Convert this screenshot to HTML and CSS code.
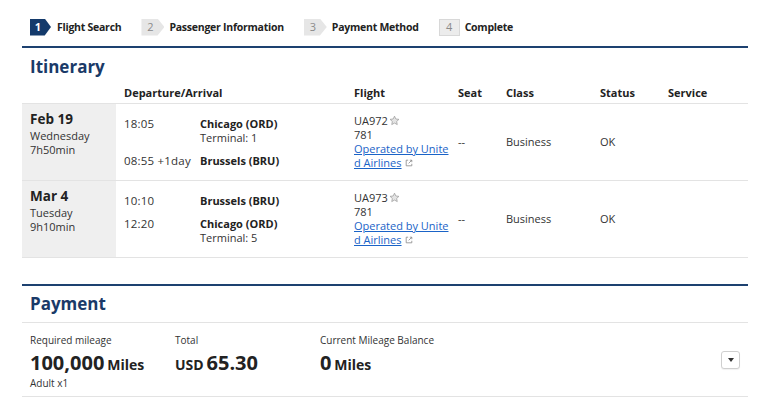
FILE: index.html
```html
<!DOCTYPE html>
<html lang="en">
<head>
<meta charset="utf-8">
<title>Itinerary</title>
<link rel="stylesheet" href="styles.css">
</head>
<body>
<div class="page">
  <nav class="steps">
    <div class="step active"><span class="badge">1</span><span class="label">Flight Search</span></div>
    <div class="step"><span class="badge">2</span><span class="label">Passenger Information</span></div>
    <div class="step"><span class="badge">3</span><span class="label">Payment Method</span></div>
    <div class="step"><span class="badge last">4</span><span class="label">Complete</span></div>
  </nav>

  <section class="section">
    <h2 class="title">Itinerary</h2>
    <div class="row head">
      <div class="c-date"></div>
      <div class="c-route">Departure/Arrival</div>
      <div class="c-flight">Flight</div>
      <div class="c-seat">Seat</div>
      <div class="c-class">Class</div>
      <div class="c-status">Status</div>
      <div class="c-service">Service</div>
    </div>

    <div class="row body">
      <div class="c-date">
        <div class="date">Feb 19</div>
        <div>Wednesday</div>
        <div>7h50min</div>
      </div>
      <div class="c-route route">
        <div class="leg">
          <div class="time">18:05</div>
          <div class="place"><strong>Chicago (ORD)</strong><span>Terminal: 1</span></div>
        </div>
        <div class="leg">
          <div class="time">08:55 +1day</div>
          <div class="place"><strong>Brussels (BRU)</strong></div>
        </div>
      </div>
      <div class="c-flight flight">
        <div>UA972<svg class="star" viewBox="0 0 24 24"><path d="M12 2.5l2.9 6.2 6.8.8-5 4.7 1.3 6.7L12 17.6l-6 3.3 1.3-6.7-5-4.7 6.8-.8z"/></svg></div>
        <div>781</div>
        <div><a href="#">Operated by United Airlines</a><svg class="ext" viewBox="0 0 10 10"><path d="M4 1.5H1.5v7h7V6M6 1.5h2.5V4M8.5 1.5L4.5 5.5"/></svg></div>
      </div>
      <div class="c-seat mid">--</div>
      <div class="c-class mid">Business</div>
      <div class="c-status mid">OK</div>
      <div class="c-service mid"></div>
    </div>

    <div class="row body">
      <div class="c-date">
        <div class="date">Mar 4</div>
        <div>Tuesday</div>
        <div>9h10min</div>
      </div>
      <div class="c-route route">
        <div class="leg">
          <div class="time">10:10</div>
          <div class="place"><strong>Brussels (BRU)</strong></div>
        </div>
        <div class="leg">
          <div class="time">12:20</div>
          <div class="place"><strong>Chicago (ORD)</strong><span>Terminal: 5</span></div>
        </div>
      </div>
      <div class="c-flight flight">
        <div>UA973<svg class="star" viewBox="0 0 24 24"><path d="M12 2.5l2.9 6.2 6.8.8-5 4.7 1.3 6.7L12 17.6l-6 3.3 1.3-6.7-5-4.7 6.8-.8z"/></svg></div>
        <div>781</div>
        <div><a href="#">Operated by United Airlines</a><svg class="ext" viewBox="0 0 10 10"><path d="M4 1.5H1.5v7h7V6M6 1.5h2.5V4M8.5 1.5L4.5 5.5"/></svg></div>
      </div>
      <div class="c-seat mid">--</div>
      <div class="c-class mid">Business</div>
      <div class="c-status mid">OK</div>
      <div class="c-service mid"></div>
    </div>
  </section>

  <section class="section payment">
    <h2 class="title">Payment</h2>
    <div class="pay-row">
      <div class="pay-col">
        <div class="pay-label">Required mileage</div>
        <div class="pay-value"><span class="big">100,000</span> <span class="unit">Miles</span></div>
        <div class="pay-label">Adult x1</div>
      </div>
      <div class="pay-col">
        <div class="pay-label">Total</div>
        <div class="pay-value"><span class="unit">USD</span> <span class="big">65.30</span></div>
      </div>
      <div class="pay-col">
        <div class="pay-label">Current Mileage Balance</div>
        <div class="pay-value"><span class="big">0</span> <span class="unit">Miles</span></div>
      </div>
      <button class="toggle" type="button" aria-label="Expand"><span class="caret"></span></button>
    </div>
  </section>
</div>
</body>
</html>
```

FILE: styles.css
```css
* { box-sizing: border-box; }

body {
  margin: 0;
  background: #fff;
  color: #333;
  font-family: "Open Sans", "DejaVu Sans", sans-serif;
  font-size: 11px;
  line-height: 14px;
}

.page {
  padding: 0 20px 0 22px;
}

/* steps */
.steps {
  display: flex;
  align-items: center;
  gap: 20px;
  height: 18px;
  margin-top: 18px;
  padding-left: 8px;
}

.step {
  display: flex;
  align-items: center;
  gap: 5px;
}

.label {
  font-weight: 700;
  font-size: 10.5px;
  letter-spacing: -0.25px;
  color: #222;
}

.badge {
  display: flex;
  align-items: center;
  justify-content: center;
  width: 23px;
  height: 17px;
  padding-right: 5px;
  background: #e6e6e6;
  color: #8a8a8a;
  font-weight: 400;
  font-size: 11px;
  clip-path: polygon(0 0, 70% 0, 100% 50%, 70% 100%, 0 100%);
}

.step.active .badge {
  background: #143a6b;
  color: #fff;
  font-weight: 700;
  width: 21px;
}

.step.active {
  gap: 6px;
}

.badge.last {
  clip-path: none;
  padding-right: 0;
  width: 21px;
  border: 1px solid #d8d8d8;
  background: #ececec;
}

/* sections */
.section {
  border-top: 2px solid #1d4170;
  margin-top: 10px;
}

.title {
  margin: 0;
  padding-left: 8px;
  height: 35px;
  line-height: 37px;
  font-size: 17px;
  font-weight: 700;
  color: #1a3a68;
}

/* itinerary grid */
.row {
  display: grid;
  grid-template-columns: 94px 230px 104px 48px 94px 68px 88px;
  border-bottom: 1px solid #e3e3e3;
}

.row > div {
  padding-left: 8px;
}

.row.head {
  height: 21px;
  align-items: center;
  font-weight: 700;
  color: #222;
}

.row.body {
  min-height: 77px;
}

.c-date {
  background: #efefef;
}

.row.head .c-date {
  background: transparent;
}

.row.body .c-date {
  padding-top: 6px;
}

.date {
  font-size: 13.5px;
  font-weight: 700;
  line-height: 19px;
  color: #222;
}

.route {
  display: flex;
  flex-direction: column;
  gap: 9px;
  padding-top: 13px;
}

.leg {
  display: grid;
  grid-template-columns: 76px 1fr;
}

.time {
  font-size: 11.5px;
  letter-spacing: 0.2px;
}

.place {
  display: flex;
  flex-direction: column;
}

.place strong {
  color: #222;
}

.flight {
  padding-top: 10px;
  padding-bottom: 10px;
  padding-right: 0;
}

.flight a {
  color: #1a63c7;
  text-decoration: underline;
  word-break: break-all;
}

.star {
  width: 11px;
  height: 11px;
  margin-left: 1px;
  vertical-align: -1px;
  fill: #e4e4e4;
  stroke: #9a9a9a;
  stroke-width: 1.6;
}

.ext {
  width: 8px;
  height: 8px;
  margin-left: 3px;
  fill: none;
  stroke: #888;
  stroke-width: 1;
  vertical-align: 0;
}

.mid {
  display: flex;
  align-items: center;
}

/* payment */
.payment {
  margin-top: 26px;
}

.payment .title {
  height: 37px;
  line-height: 36px;
  border-bottom: 1px solid #e3e3e3;
}

.pay-row {
  display: flex;
  height: 74px;
  padding: 10px 8px 0 8px;
  border-bottom: 1px solid #e3e3e3;
}

.pay-col {
  width: 145px;
}

.pay-label {
  font-size: 10px;
  line-height: 14px;
  color: #333;
}

.pay-value {
  line-height: 20px;
  margin-top: 6px;
  color: #222;
  font-weight: 700;
}

.big {
  font-size: 20px;
}

.unit {
  font-size: 14px;
}

.toggle {
  margin-left: auto;
  margin-top: 18px;
  width: 19px;
  height: 18px;
  padding: 0;
  border: 1px solid #cfcfcf;
  border-radius: 3px;
  background: #fff;
  display: flex;
  align-items: center;
  justify-content: center;
  box-shadow: 0 1px 1px rgba(0,0,0,0.06);
}

.caret {
  width: 0;
  height: 0;
  border-left: 3px solid transparent;
  border-right: 3px solid transparent;
  border-top: 4px solid #333;
}
```
